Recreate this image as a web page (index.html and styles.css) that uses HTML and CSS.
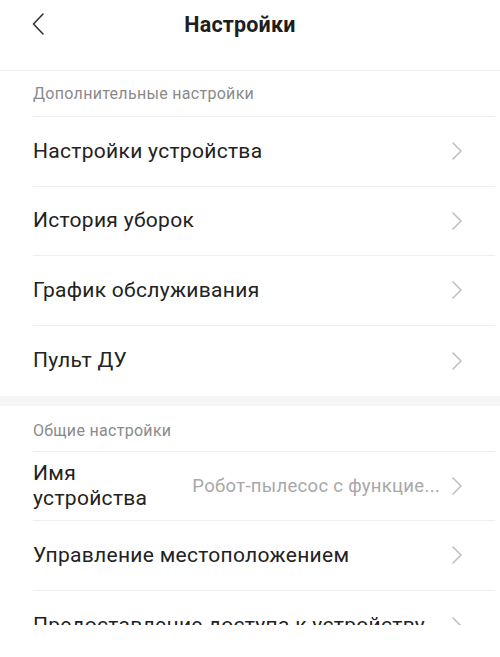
FILE: index.html
```html
<!DOCTYPE html>
<html lang="ru">
<head>
<meta charset="utf-8">
<title>Настройки</title>
<link rel="stylesheet" href="styles.css">
</head>
<body>
<div class="screen">
  <header class="topbar">
    <span class="back" aria-label="Назад">
      <svg width="12" height="22" viewBox="0 0 12 22"><polyline points="11,1 1.5,11 11,21" fill="none" stroke="#333" stroke-width="1.6" stroke-linecap="round" stroke-linejoin="round"/></svg>
    </span>
    <h1 class="title">Настройки</h1>
  </header>

  <section class="group">
    <div class="group-title">Дополнительные настройки</div>
    <ul class="list">
      <li class="item"><span class="label">Настройки устройства</span><span class="chev"><svg width="10" height="18" viewBox="0 0 10 18"><polyline points="1,1 9,9 1,17" fill="none" stroke="#bdbdbd" stroke-width="1.5" stroke-linecap="round" stroke-linejoin="round"/></svg></span></li>
      <li class="item"><span class="label">История уборок</span><span class="chev"><svg width="10" height="18" viewBox="0 0 10 18"><polyline points="1,1 9,9 1,17" fill="none" stroke="#bdbdbd" stroke-width="1.5" stroke-linecap="round" stroke-linejoin="round"/></svg></span></li>
      <li class="item"><span class="label">График обслуживания</span><span class="chev"><svg width="10" height="18" viewBox="0 0 10 18"><polyline points="1,1 9,9 1,17" fill="none" stroke="#bdbdbd" stroke-width="1.5" stroke-linecap="round" stroke-linejoin="round"/></svg></span></li>
      <li class="item"><span class="label">Пульт ДУ</span><span class="chev"><svg width="10" height="18" viewBox="0 0 10 18"><polyline points="1,1 9,9 1,17" fill="none" stroke="#bdbdbd" stroke-width="1.5" stroke-linecap="round" stroke-linejoin="round"/></svg></span></li>
    </ul>
  </section>

  <div class="gap"></div>

  <section class="group">
    <div class="group-title lower">Общие настройки</div>
    <ul class="list">
      <li class="item"><span class="label narrow">Имя устройства</span><span class="value">Робот-пылесос с функцие...</span><span class="chev"><svg width="10" height="18" viewBox="0 0 10 18"><polyline points="1,1 9,9 1,17" fill="none" stroke="#bdbdbd" stroke-width="1.5" stroke-linecap="round" stroke-linejoin="round"/></svg></span></li>
      <li class="item"><span class="label">Управление местоположением</span><span class="chev"><svg width="10" height="18" viewBox="0 0 10 18"><polyline points="1,1 9,9 1,17" fill="none" stroke="#bdbdbd" stroke-width="1.5" stroke-linecap="round" stroke-linejoin="round"/></svg></span></li>
      <li class="item"><span class="label">Предоставление доступа к устройству</span><span class="chev"><svg width="10" height="18" viewBox="0 0 10 18"><polyline points="1,1 9,9 1,17" fill="none" stroke="#bdbdbd" stroke-width="1.5" stroke-linecap="round" stroke-linejoin="round"/></svg></span></li>
    </ul>
  </section>
</div>
</body>
</html>
```

FILE: styles.css
```css
html, body {
  margin: 0;
  padding: 0;
  background: #fff;
}
body {
  font-family: Roboto, "Noto Sans", "Liberation Sans", sans-serif;
  color: #222;
}
.screen {
  width: 500px;
  height: 625px;
  overflow: hidden;
  background: #fff;
}
.topbar {
  box-sizing: border-box;
  height: 71px;
  border-bottom: 1px solid #efefef;
  display: flex;
  align-items: flex-start;
  padding: 13px 64px 0 32px;
}
.back {
  display: flex;
  width: 12px;
  height: 22px;
}
.title {
  flex: 1;
  margin: 0;
  text-align: center;
  font-size: 21.5px;
  font-weight: 700;
  line-height: 24px;
  letter-spacing: 0.2px;
  color: #1e1e1e;
}
.group-title {
  height: 45px;
  display: flex;
  align-items: center;
  margin-left: 33px;
  margin-right: 5px;
  border-bottom: 1px solid #f0f0f0;
  font-size: 16px;
  letter-spacing: 0.3px;
  color: #8a8a8a;
}
.group-title.lower {
  height: 41px;
  padding-top: 4px;
}
.list {
  list-style: none;
  margin: 0;
  padding: 0;
}
.item {
  min-height: 68.5px;
  margin-left: 33px;
  margin-right: 5px;
  padding-right: 33px;
  border-bottom: 1px solid #f0f0f0;
  display: flex;
  align-items: center;
  gap: 12px;
}
.list .item:last-child {
  border-bottom: none;
  min-height: 70px;
}
.label {
  flex: 1;
  font-size: 21px;
  line-height: 25px;
  letter-spacing: 0.3px;
  color: #222;
}
.label.narrow {
  flex: 0 0 120px;
}
.value {
  flex: 1;
  text-align: right;
  font-size: 18.5px;
  letter-spacing: 0.3px;
  color: #a8a8a8;
  white-space: nowrap;
  overflow: hidden;
}
.chev {
  display: flex;
  width: 10px;
  height: 18px;
}
.gap {
  height: 10px;
  background: #f5f5f5;
}
```
